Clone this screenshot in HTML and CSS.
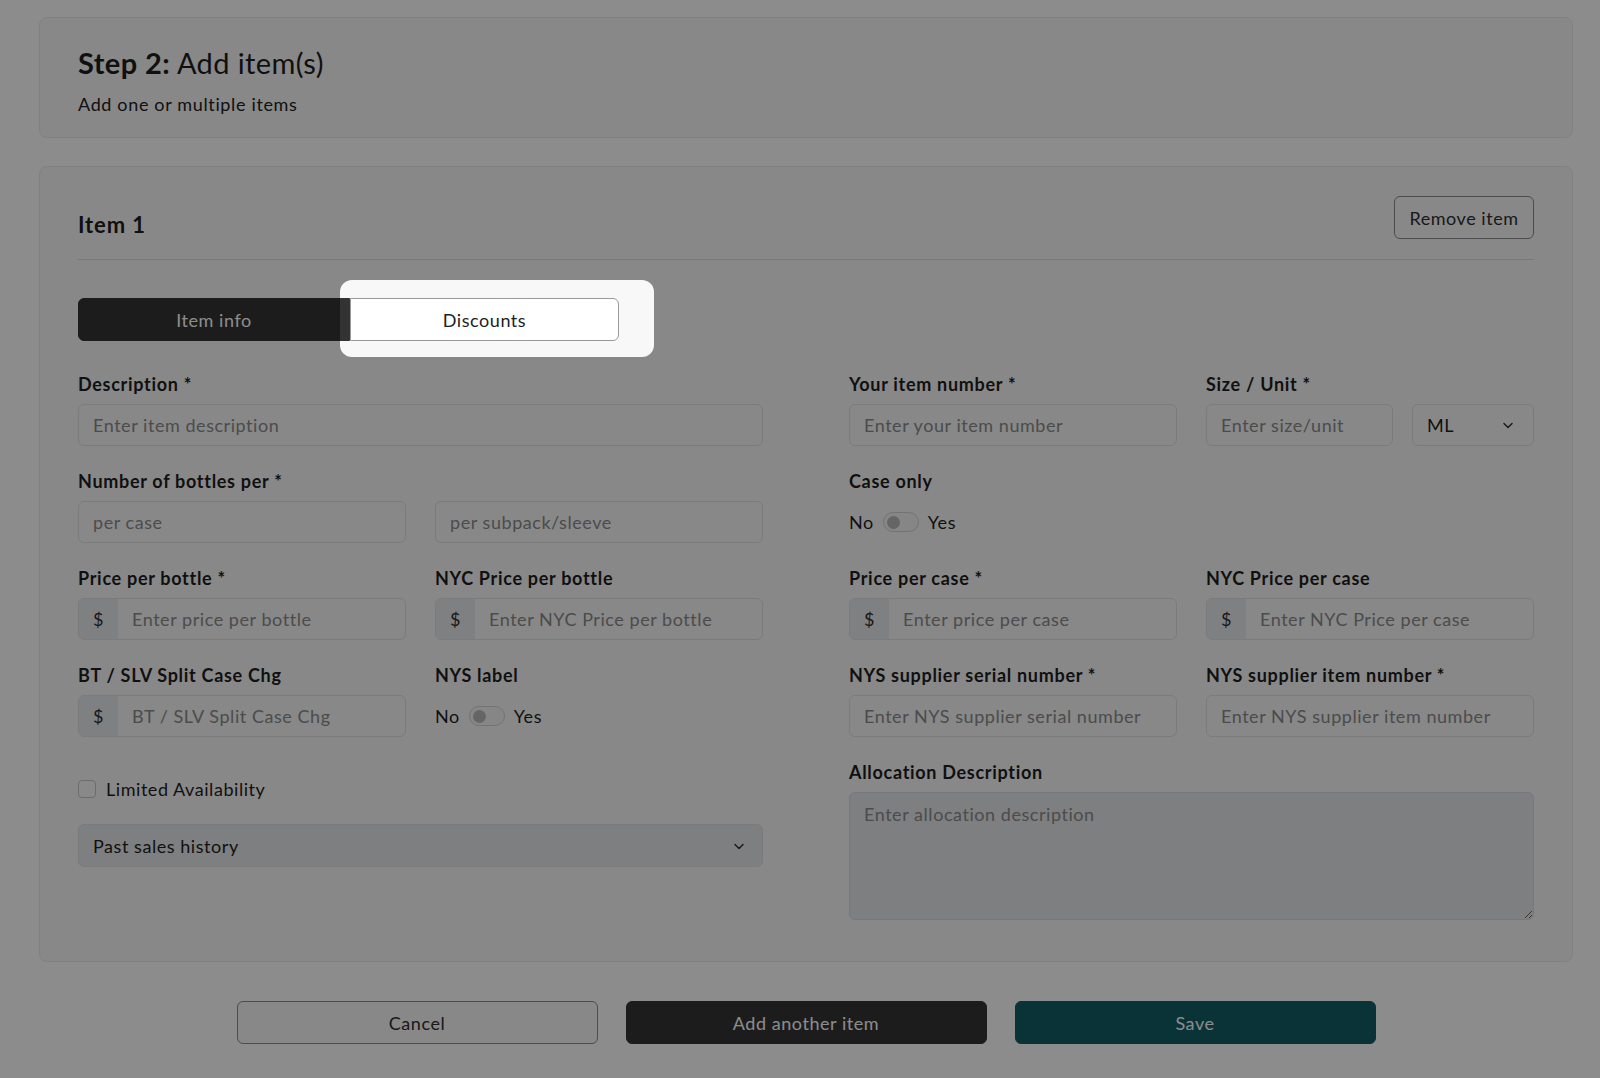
FILE: index.html
```html
<!DOCTYPE html>
<html lang="en">
<head>
<meta charset="utf-8">
<title>Step 2: Add item(s)</title>
<link rel="stylesheet" href="styles.css">
</head>
<body>
<main class="page">
  <section class="card step-card">
    <h1 class="step-title"><strong>Step 2:</strong> Add item(s)</h1>
    <p class="step-sub">Add one or multiple items</p>
  </section>

  <section class="card item-card">
    <header class="item-head">
      <h2 class="item-title">Item 1</h2>
      <button class="btn btn-outline btn-remove" type="button">Remove item</button>
    </header>

    <div class="tabs">
      <button class="tab tab-active" type="button">Item info</button>
      <button class="tab tab-plain" type="button">Discounts</button>
      <div class="spotlight"></div>
    </div>

    <div class="form-grid">
      <div class="col">
        <div class="field">
          <label class="label">Description *</label>
          <input class="input" placeholder="Enter item description">
        </div>
        <div class="field">
          <label class="label">Number of bottles per *</label>
          <div class="pair">
            <input class="input" placeholder="per case">
            <input class="input" placeholder="per subpack/sleeve">
          </div>
        </div>
        <div class="pair">
          <div class="field">
            <label class="label">Price per bottle *</label>
            <div class="prefixed"><span class="prefix">$</span><input class="input-bare" placeholder="Enter price per bottle"></div>
          </div>
          <div class="field">
            <label class="label">NYC Price per bottle</label>
            <div class="prefixed"><span class="prefix">$</span><input class="input-bare" placeholder="Enter NYC Price per bottle"></div>
          </div>
        </div>
        <div class="pair">
          <div class="field">
            <label class="label">BT / SLV Split Case Chg</label>
            <div class="prefixed"><span class="prefix">$</span><input class="input-bare" placeholder="BT / SLV Split Case Chg"></div>
          </div>
          <div class="field">
            <label class="label">NYS label</label>
            <div class="toggle-row"><span>No</span><span class="toggle"><span class="knob"></span></span><span>Yes</span></div>
          </div>
        </div>
        <div class="check-row">
          <span class="checkbox"></span><span>Limited Availability</span>
        </div>
        <div class="select select-filled">
          <span>Past sales history</span>
          <svg class="chev" width="14" height="14" viewBox="0 0 14 14"><path d="M3 5.5l4 4 4-4" fill="none" stroke="#333" stroke-width="1.5" stroke-linecap="round" stroke-linejoin="round"/></svg>
        </div>
      </div>

      <div class="col">
        <div class="pair">
          <div class="field">
            <label class="label">Your item number *</label>
            <input class="input" placeholder="Enter your item number">
          </div>
          <div class="field">
            <label class="label">Size / Unit *</label>
            <div class="size-row">
              <input class="input" placeholder="Enter size/unit">
              <div class="select">
                <span class="select-val">ML</span>
                <svg class="chev" width="14" height="14" viewBox="0 0 14 14"><path d="M3 5.5l4 4 4-4" fill="none" stroke="#333" stroke-width="1.5" stroke-linecap="round" stroke-linejoin="round"/></svg>
              </div>
            </div>
          </div>
        </div>
        <div class="field">
          <label class="label">Case only</label>
          <div class="toggle-row"><span>No</span><span class="toggle"><span class="knob"></span></span><span>Yes</span></div>
        </div>
        <div class="pair">
          <div class="field">
            <label class="label">Price per case *</label>
            <div class="prefixed"><span class="prefix">$</span><input class="input-bare" placeholder="Enter price per case"></div>
          </div>
          <div class="field">
            <label class="label">NYC Price per case</label>
            <div class="prefixed"><span class="prefix">$</span><input class="input-bare" placeholder="Enter NYC Price per case"></div>
          </div>
        </div>
        <div class="pair">
          <div class="field">
            <label class="label">NYS supplier serial number *</label>
            <input class="input" placeholder="Enter NYS supplier serial number">
          </div>
          <div class="field">
            <label class="label">NYS supplier item number *</label>
            <input class="input" placeholder="Enter NYS supplier item number">
          </div>
        </div>
        <div class="field">
          <label class="label">Allocation Description</label>
          <textarea class="textarea" placeholder="Enter allocation description"></textarea>
        </div>
      </div>
    </div>
  </section>

  <div class="actions">
    <button class="btn btn-outline btn-wide" type="button">Cancel</button>
    <button class="btn btn-dark btn-wide" type="button">Add another item</button>
    <button class="btn btn-teal btn-wide" type="button">Save</button>
  </div>
</main>
</body>
</html>
```

FILE: styles.css
```css
* { box-sizing: border-box; }
html, body { margin: 0; padding: 0; }
body {
  background: #ffffff;
  font-family: "Lato", "Noto Sans", sans-serif;
  color: #1e1e1e;
  letter-spacing: 0.55px;
  overflow: hidden;
  height: 1078px;
}
button, input, textarea { letter-spacing: inherit; }
.page {
  padding: 17px 27px 0 39px;
}
.card {
  background: #f8f8f8;
  border: 1px solid #ececec;
  border-radius: 8px;
}
.step-card {
  padding: 27px 38px 21px;
}
.step-title {
  margin: 0;
  font-size: 29px;
  line-height: 36px;
  font-weight: 400;
  letter-spacing: 0.4px;
  color: #1e1e1e;
}
.step-title strong { font-weight: 700; }
.step-sub {
  margin: 11px 0 0;
  font-size: 18px;
  line-height: 24px;
  letter-spacing: 0.65px;
  color: #222;
}
.item-card {
  margin-top: 28px;
  padding: 29px 38px 41px;
}
.item-head {
  display: flex;
  justify-content: space-between;
  align-items: flex-end;
  padding-bottom: 20px;
  border-bottom: 1px solid #dcdcdc;
}
.item-title {
  margin: 0;
  font-size: 22px;
  line-height: 28px;
  font-weight: 700;
  letter-spacing: 0.9px;
  color: #1e1e1e;
}
.btn {
  font-family: inherit;
  font-size: 18px;
  height: 43px;
  border-radius: 6px;
  cursor: pointer;
}
.btn-outline {
  background: #f8f8f8;
  border: 1px solid #8a8a8a;
  color: #2e2e2e;
}
.btn-remove {
  width: 140px;
}
.tabs {
  position: relative;
  display: flex;
  margin-top: 38px;
  width: max-content;
}
.tab {
  font-family: inherit;
  font-size: 18px;
  height: 43px;
  cursor: pointer;
}
.tab-active {
  width: 272px;
  background: #333333;
  color: #ffffff;
  border: 1px solid #333333;
  border-radius: 6px 0 0 6px;
}
.tab-plain {
  width: 269px;
  background: #ffffff;
  color: #1e1e1e;
  border: 1px solid #9a9a9a;
  border-radius: 0 6px 6px 0;
}
.spotlight {
  position: absolute;
  left: 262px;
  top: -18px;
  width: 314px;
  height: 77px;
  border-radius: 12px;
  box-shadow: 0 0 0 4000px rgba(0, 0, 0, 0.45);
  pointer-events: none;
  z-index: 100;
}
.form-grid {
  margin-top: 32px;
  display: grid;
  grid-template-columns: 1fr 1fr;
  column-gap: 86px;
  align-items: start;
}
.col {
  display: flex;
  flex-direction: column;
  gap: 24px;
}
.field {
  display: flex;
  flex-direction: column;
  min-width: 0;
}
.label {
  font-size: 18px;
  line-height: 22px;
  font-weight: 700;
  letter-spacing: 0.7px;
  color: #1e1e1e;
  margin-bottom: 9px;
  white-space: nowrap;
}
.pair {
  display: grid;
  grid-template-columns: 1fr 1fr;
  column-gap: 29px;
}
.input, .input-bare, .textarea {
  font-family: inherit;
  font-size: 18px;
  color: #1e1e1e;
}
.input {
  height: 42px;
  width: 100%;
  min-width: 0;
  border: 1px solid #e0e0e0;
  border-radius: 6px;
  background: #f8f8f8;
  padding: 0 14px;
  outline: none;
}
.input::placeholder, .input-bare::placeholder, .textarea::placeholder {
  color: #8a8a8a;
  opacity: 1;
}
.prefixed {
  display: flex;
  height: 42px;
  border: 1px solid #e0e0e0;
  border-radius: 6px;
  overflow: hidden;
  background: #f8f8f8;
}
.prefix {
  width: 39px;
  flex: none;
  display: flex;
  align-items: center;
  justify-content: center;
  background: #e8e9ec;
  font-size: 18px;
  color: #2e2e2e;
}
.input-bare {
  flex: 1;
  min-width: 0;
  border: none;
  background: transparent;
  padding: 0 14px;
  outline: none;
}
.toggle-row {
  height: 42px;
  display: flex;
  align-items: center;
  gap: 9px;
  font-size: 18px;
  color: #1e1e1e;
}
.toggle {
  width: 36px;
  height: 20px;
  border: 1px solid #d2d2d2;
  border-radius: 10px;
  background: #f4f4f4;
  display: flex;
  align-items: center;
  padding-left: 3px;
}
.knob {
  width: 13px;
  height: 13px;
  border-radius: 50%;
  background: #b9b9b9;
}
.size-row {
  display: grid;
  grid-template-columns: 1fr 122px;
  column-gap: 19px;
}
.select {
  height: 42px;
  border: 1px solid #e0e0e0;
  border-radius: 6px;
  background: #f8f8f8;
  display: flex;
  align-items: center;
  justify-content: space-between;
  padding: 0 18px 0 14px;
  font-size: 18px;
  color: #1e1e1e;
}
.select-filled {
  background: #e6e7ea;
  border-color: #dedfe2;
  height: 43px;
  padding-right: 16px;
}
.check-row {
  display: flex;
  align-items: center;
  gap: 10px;
  height: 22px;
  margin-top: 17px;
  font-size: 18px;
  color: #1e1e1e;
}
.checkbox {
  width: 18px;
  height: 18px;
  border: 1px solid #c4c4c4;
  border-radius: 4px;
  background: #fafafa;
}
.textarea {
  height: 128px;
  border: 1px solid #dadbde;
  border-radius: 6px;
  background: #e6e7ea;
  padding: 10px 14px;
  resize: vertical;
  outline: none;
  width: 100%;
}
.actions {
  margin-top: 39px;
  display: flex;
  justify-content: center;
  gap: 28px;
}
.btn-wide {
  width: 361px;
}
.btn-dark {
  background: #333333;
  border: 1px solid #333333;
  color: #ffffff;
}
.btn-teal {
  background: #135d66;
  border: 1px solid #135d66;
  color: #ffffff;
}
```
